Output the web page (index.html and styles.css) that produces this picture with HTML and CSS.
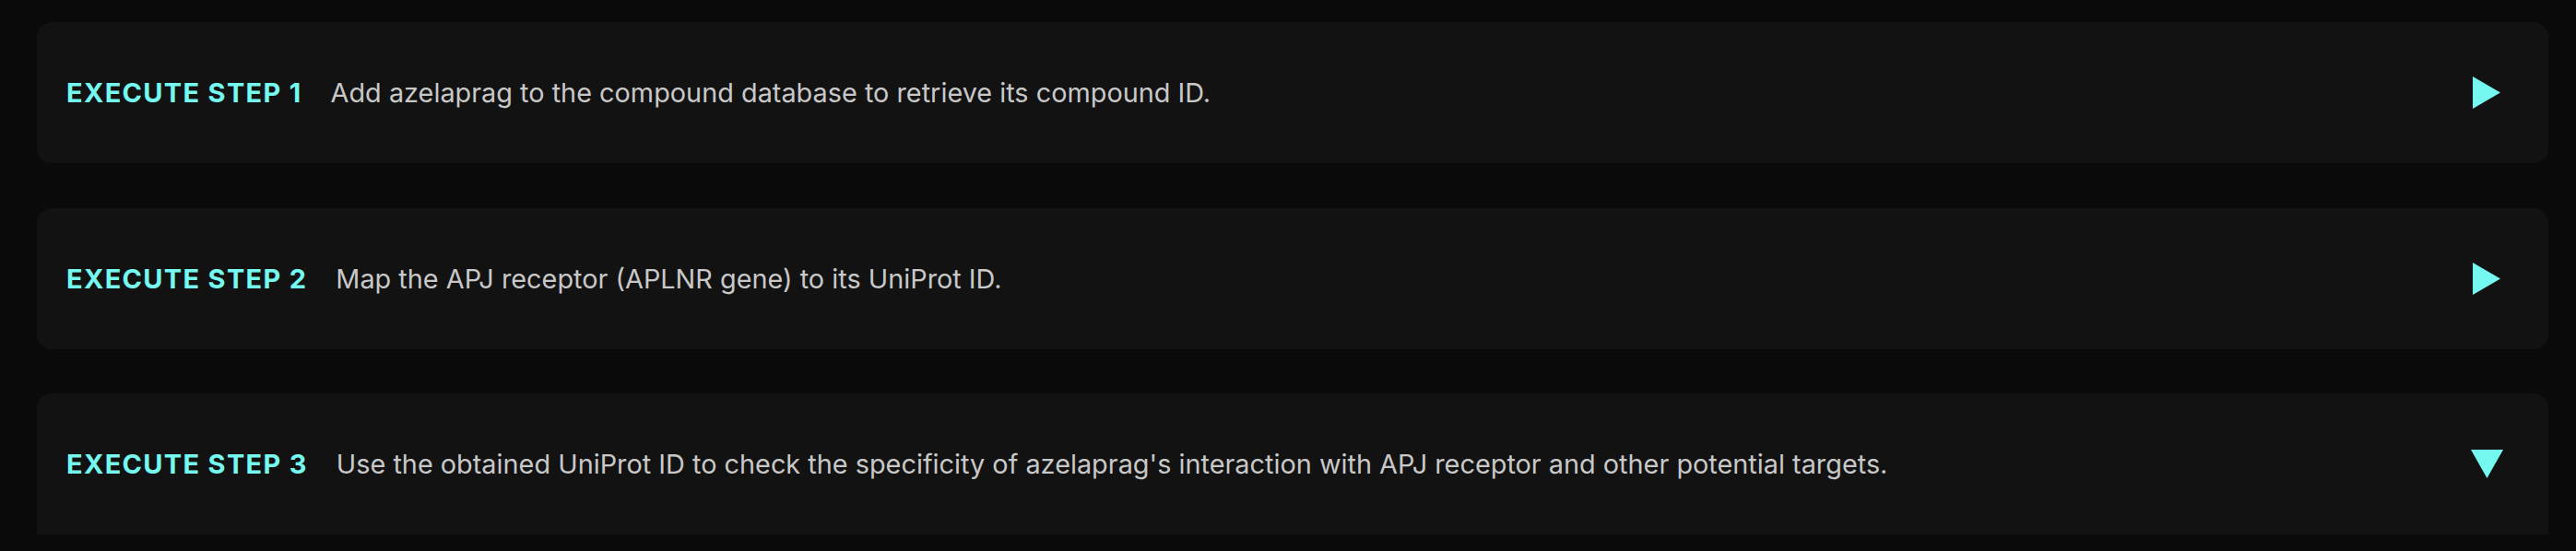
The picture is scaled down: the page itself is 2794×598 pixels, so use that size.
FILE: index.html
```html
<!DOCTYPE html>
<html lang="en">
<head>
<meta charset="utf-8">
<title>Execute steps</title>
<link rel="stylesheet" href="styles.css">
</head>
<body>
<div class="steps">
  <div class="step">
    <div class="step-head">
      <span class="step-label">EXECUTE STEP 1</span>
      <span class="step-desc">Add azelaprag to the compound database to retrieve its compound ID.</span>
      <span class="step-toggle">
        <svg width="30" height="35" viewBox="0 0 30 35"><polygon points="0,0 30,17.5 0,35" fill="#74f8ef"/></svg>
      </span>
    </div>
  </div>
  <div class="step">
    <div class="step-head">
      <span class="step-label">EXECUTE STEP 2</span>
      <span class="step-desc">Map the APJ receptor (APLNR gene) to its UniProt ID.</span>
      <span class="step-toggle">
        <svg width="30" height="35" viewBox="0 0 30 35"><polygon points="0,0 30,17.5 0,35" fill="#74f8ef"/></svg>
      </span>
    </div>
  </div>
  <div class="step step-open">
    <div class="step-head">
      <span class="step-label">EXECUTE STEP 3</span>
      <span class="step-desc">Use the obtained UniProt ID to check the specificity of azelaprag's interaction with APJ receptor and other potential targets.</span>
      <span class="step-toggle">
        <svg width="35" height="31" viewBox="0 0 35 31"><polygon points="0,0 35,0 17.5,31" fill="#74f8ef"/></svg>
      </span>
    </div>
    <div class="step-body"></div>
  </div>
</div>
</body>
</html>
```

FILE: styles.css
```css
html, body {
  margin: 0;
  padding: 0;
  background: #0a0a0a;
}

body {
  font-family: Inter, "Liberation Sans", sans-serif;
  height: 598px;
  overflow: hidden;
}

.steps {
  height: 580px;
  overflow: hidden;
  box-sizing: border-box;
  padding: 24px 30px 0 40px;
  display: flex;
  flex-direction: column;
  gap: 48.5px;
}

.step {
  background: #121212;
  border-radius: 16px;
  flex-shrink: 0;
}

.step-open {
  border-radius: 16px 16px 0 0;
}

.step-head {
  height: 153px;
  display: flex;
  align-items: center;
  padding: 0 49px 0 32px;
}

.step-label {
  color: #74f8ef;
  font-weight: 700;
  font-size: 29px;
  letter-spacing: 0.045em;
  white-space: nowrap;
  margin-right: 31px;
}

.step-desc {
  color: #c8c8c8;
  font-size: 28.85px;
  font-weight: 400;
  flex: 1;
  white-space: nowrap;
}

.step-toggle {
  width: 36px;
  height: 36px;
  display: flex;
  align-items: center;
  justify-content: center;
}

.step-body {
  height: 200px;
}
```
